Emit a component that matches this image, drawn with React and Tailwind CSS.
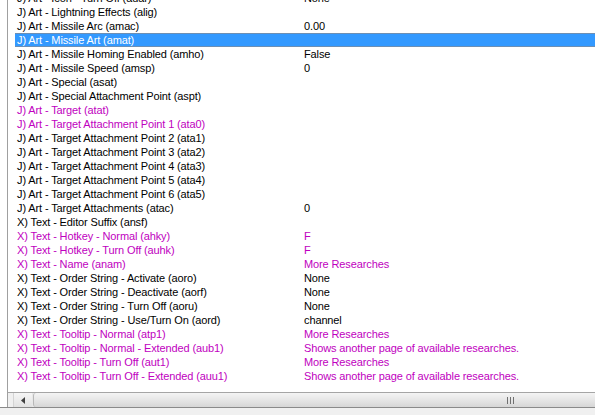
import React from 'react';

const M = 'text-[#c000c0]';

const rows = [
  { name: 'J) Art - Icon - Turn Off (auar)', value: 'None' },
  { name: 'J) Art - Lightning Effects (alig)', value: '' },
  { name: 'J) Art - Missile Arc (amac)', value: '0.00' },
  { name: 'J) Art - Missile Art (amat)', value: '', selected: true },
  { name: 'J) Art - Missile Homing Enabled (amho)', value: 'False' },
  { name: 'J) Art - Missile Speed (amsp)', value: '0' },
  { name: 'J) Art - Special (asat)', value: '' },
  { name: 'J) Art - Special Attachment Point (aspt)', value: '' },
  { name: 'J) Art - Target (atat)', value: '', custom: true },
  { name: 'J) Art - Target Attachment Point 1 (ata0)', value: '', custom: true },
  { name: 'J) Art - Target Attachment Point 2 (ata1)', value: '' },
  { name: 'J) Art - Target Attachment Point 3 (ata2)', value: '' },
  { name: 'J) Art - Target Attachment Point 4 (ata3)', value: '' },
  { name: 'J) Art - Target Attachment Point 5 (ata4)', value: '' },
  { name: 'J) Art - Target Attachment Point 6 (ata5)', value: '' },
  { name: 'J) Art - Target Attachments (atac)', value: '0' },
  { name: 'X) Text - Editor Suffix (ansf)', value: '' },
  { name: 'X) Text - Hotkey - Normal (ahky)', value: 'F', custom: true },
  { name: 'X) Text - Hotkey - Turn Off (auhk)', value: 'F', custom: true },
  { name: 'X) Text - Name (anam)', value: 'More Researches', custom: true },
  { name: 'X) Text - Order String - Activate (aoro)', value: 'None' },
  { name: 'X) Text - Order String - Deactivate (aorf)', value: 'None' },
  { name: 'X) Text - Order String - Turn Off (aoru)', value: 'None' },
  { name: 'X) Text - Order String - Use/Turn On (aord)', value: 'channel' },
  { name: 'X) Text - Tooltip - Normal (atp1)', value: 'More Researches', custom: true },
  { name: 'X) Text - Tooltip - Normal - Extended (aub1)', value: 'Shows another page of available researches.', custom: true },
  { name: 'X) Text - Tooltip - Turn Off (aut1)', value: 'More Researches', custom: true },
  { name: 'X) Text - Tooltip - Turn Off - Extended (auu1)', value: 'Shows another page of available researches.', custom: true },
];

function Row({ row }) {
  if (row.selected) {
    return (
      <div className="flex h-[14px] box-border border-y border-[#6d8fb4] bg-[#3399ff] text-white leading-[12px]">
        <div className="w-[289px] shrink-0 pl-[2px] whitespace-nowrap">{row.name}</div>
        <div className="flex-1 whitespace-nowrap">{row.value}</div>
      </div>
    );
  }
  return (
    <div className={`flex h-[14px] leading-[14px] ${row.custom ? M : 'text-black'}`}>
      <div className="w-[289px] shrink-0 pl-[2px] whitespace-nowrap">{row.name}</div>
      <div className="flex-1 whitespace-nowrap">{row.value}</div>
    </div>
  );
}

function HScrollbar() {
  return (
    <div className="h-[15px] flex shrink-0 border-t border-[#a5a5a5] bg-[#e8e8e8]">
      <div className="w-[6px] bg-[#f0f0f0] border-r border-[#d4d4d4]" />
      <div className="w-[18px] flex items-center justify-center bg-gradient-to-b from-[#f6f6f6] to-[#e2e2e2]">
        <svg width="5" height="7" viewBox="0 0 5 7">
          <path d="M4 0 L0 3.5 L4 7 Z" fill="#404040" />
        </svg>
      </div>
      <div className="flex-1 ml-px rounded-l-[3px] border-l border-[#b8b8b8] bg-gradient-to-b from-[#f4f4f4] via-[#e6e6e6] to-[#d6d6d6] flex items-center">
        <div className="ml-[473px] flex gap-[2px]">
          <div className="w-px h-[7px] bg-[#707070]" />
          <div className="w-px h-[7px] bg-[#707070]" />
          <div className="w-px h-[7px] bg-[#707070]" />
        </div>
      </div>
    </div>
  );
}

export default function App() {
  return (
    <div className="w-[595px] h-[415px] bg-white overflow-hidden flex flex-col text-[11px] tracking-[-0.12px] font-['Liberation_Sans',Arial,sans-serif]">
      <div className="flex h-[407px] shrink-0">
        <div className="w-[7px] bg-white" />
        <div className="w-px bg-[#a0a0a0]" />
        <div className="flex-1 flex flex-col min-w-0">
          <div className="flex-1 overflow-hidden">
            <div className="-mt-[9px] pl-[7px]">
              {rows.map((r) => (
                <Row key={r.name} row={r} />
              ))}
            </div>
          </div>
          <HScrollbar />
        </div>
      </div>
      <div className="h-px bg-[#8a8a8a]" />
      <div className="flex-1 bg-[#f0f0f0]" />
    </div>
  );
}
